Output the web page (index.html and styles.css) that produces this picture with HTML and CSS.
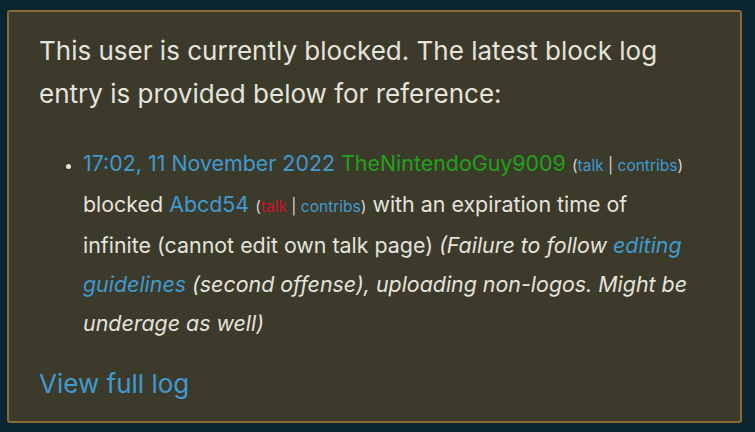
FILE: index.html
```html
<!DOCTYPE html>
<html>
<head>
    <title>Blocked user notice</title>
    <link rel="stylesheet" href="styles.css">
</head>
<body>
    <div class="notice">
        <p class="intro">This user is currently blocked. The latest block log entry is provided below for reference:</p>
        <ul class="log">
            <li>
                <a class="link" href="#">17:02, 11 November 2022</a>
                <a class="user" href="#">TheNintendoGuy9009</a>
                <span class="tools">(<a class="link" href="#">talk</a> | <a class="link" href="#">contribs</a>)</span>
                blocked <a class="link" href="#">Abcd54</a>
                <span class="tools">(<a class="new" href="#">talk</a> | <a class="link" href="#">contribs</a>)</span>
                with an expiration time of infinite (cannot edit own talk page)
                <em>(Failure to follow <a class="link" href="#">editing guidelines</a> (second offense), uploading non-logos. Might be underage as well)</em>
            </li>
        </ul>
        <a class="link full" href="#">View full log</a>
    </div>
</body>
</html>
```

FILE: styles.css
```css
body { margin: 0; background: #0b2530; font-family: Inter, "Noto Sans", sans-serif; color: #e4e3dc; }
.notice { margin: 10px 0 0 7px; width: 671px; padding: 17px 30px 16px 30px; background: #3c3a2b; border: 2px solid #8a6a34; border-radius: 3px; }
.intro { margin: 0; font-size: 26px; line-height: 43px; }
.log { margin: 29px 12px 19px 0; padding-left: 44px; font-size: 21.4px; line-height: 39px; }
.log li::marker { font-size: 17px; }
a { text-decoration: none; }
.link { color: #3f9ad0; }
.user { color: #1fa21a; }
.new { color: #c8132a; }
.tools { font-size: 15.5px; color: #d8d6cc; }
.full { font-size: 26px; line-height: 43px; display: inline-block; }
```
